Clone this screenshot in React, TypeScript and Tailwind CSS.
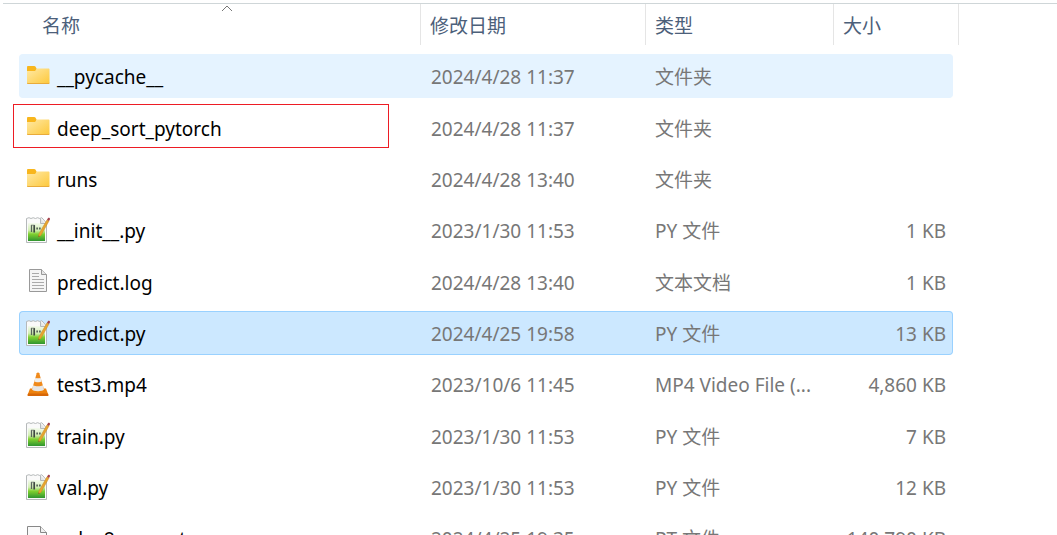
import type { ReactNode } from "react"

type IconKind = "folder" | "python" | "text" | "video" | "blank"

interface FileEntry {
  name: string
  modified: string
  type: string
  size?: string
  icon: IconKind
  state?: "hover" | "selected"
  marked?: boolean
}

const files: FileEntry[] = [
  { name: "__pycache__", modified: "2024/4/28 11:37", type: "文件夹", icon: "folder", state: "hover" },
  { name: "deep_sort_pytorch", modified: "2024/4/28 11:37", type: "文件夹", icon: "folder", marked: true },
  { name: "runs", modified: "2024/4/28 13:40", type: "文件夹", icon: "folder" },
  { name: "__init__.py", modified: "2023/1/30 11:53", type: "PY 文件", size: "1 KB", icon: "python" },
  { name: "predict.log", modified: "2024/4/28 13:40", type: "文本文档", size: "1 KB", icon: "text" },
  { name: "predict.py", modified: "2024/4/25 19:58", type: "PY 文件", size: "13 KB", icon: "python", state: "selected" },
  { name: "test3.mp4", modified: "2023/10/6 11:45", type: "MP4 Video File (...", size: "4,860 KB", icon: "video" },
  { name: "train.py", modified: "2023/1/30 11:53", type: "PY 文件", size: "7 KB", icon: "python" },
  { name: "val.py", modified: "2023/1/30 11:53", type: "PY 文件", size: "12 KB", icon: "python" },
  { name: "yolov8x-seg.pt", modified: "2024/4/25 19:35", type: "PT 文件", size: "140,790 KB", icon: "blank" },
]

function FileIcon({ kind }: { kind: IconKind }) {
  switch (kind) {
    case "folder":
      return (
        <svg className="size-6" viewBox="0 0 24 24" aria-hidden="true">
          <defs>
            <linearGradient id="folder" x1="0" y1="0" x2="1" y2="1">
              <stop offset="0" stopColor="#ffe9a6" />
              <stop offset="1" stopColor="#fdc83a" />
            </linearGradient>
          </defs>
          <path d="M1 3.2c0-.7.5-1.2 1.2-1.2h6c.5 0 .9.2 1.2.5L10.500 4.500v4H1z" fill="#f8b61d" />
          <path d="M1 7h8l2-2.500h11.500c.6 0 1 .4 1 1v13.300c0 .7-.4 1.200-1.200 1.200H2.200c-.8 0-1.200-.5-1.200-1.200z" fill="url(#folder)" />
          <path d="M1 18.500c0 1 .5 1.500 1.200 1.500h20.100c.8 0 1.200-.5 1.200-1.500-.3.400-.7.500-1.200.5H2.200c-.5 0-.9-.1-1.200-.5z" fill="#e9ab3a" />
        </svg>
      )
    case "python":
      return (
        <svg className="h-[26px] w-6" viewBox="0 0 24 26" aria-hidden="true">
          <defs>
            <linearGradient id="leaf" x1="0" y1="0" x2="0" y2="1">
              <stop offset="0" stopColor="#f4faee" />
              <stop offset=".4" stopColor="#d3efb4" />
              <stop offset=".62" stopColor="#7fd02f" />
              <stop offset="1" stopColor="#2f9430" />
            </linearGradient>
          </defs>
          <path d="M.5 1.500 3 .7l2 .8 2.200-.8 2.200.8 2.200-.8 2.200.8 2-.8L20.500 6v19.500H.5z" fill="#fafafa" stroke="#b5b9ba" />
          <path d="M2 6h17v18H2z" fill="url(#leaf)" />
          <path d="M14.500 1.500v5h5" fill="#e4e6e6" stroke="#b5b9ba" />
          <path d="M5.500 8v7" stroke="#59645b" strokeWidth="1.300" />
          <path d="M8.200 8v7.500" stroke="#3d4740" strokeWidth="1.700" />
          <path d="M5 8.200h3.500" stroke="#6d786f" strokeWidth=".8" />
          <path d="M10.300 11.500h1.700M13 11.500h1.700" stroke="#59645b" strokeWidth="1.800" />
          <path d="m21 2.800 2 1.200-8 14.200-2.500 1.800.4-3z" fill="#e6a52f" stroke="#c98827" strokeWidth=".5" />
          <path d="m21 2.800.9-1.600c.8-1 2.500 0 2 1.200L23 4z" fill="#a3414b" />
          <path d="m12.500 20 .2-1.400.9.700z" fill="#4b3b24" />
        </svg>
      )
    case "text":
      return (
        <svg className="size-6" viewBox="0 0 24 24" aria-hidden="true">
          <path d="M3.500.5h12l5 5v17h-17z" fill="#f5f5f5" stroke="#999" />
          <path d="M15.500.5v5h5" fill="#e5e5e5" stroke="#999" />
          <path d="M6 4.500h7M6 7.500h7M6 10.500h12M6 13.500h12M6 16.500h12M6 19.500h12" stroke="#aaa" />
        </svg>
      )
    case "video":
      return (
        <svg className="size-6" viewBox="0 0 24 24" aria-hidden="true">
          <path d="M4 16.500h16l2.300 6.200c.2.800-.2 1.300-1 1.300H2.700c-.8 0-1.200-.5-1-1.300z" fill="#ed820e" />
          <path d="M2 21.500h20l.4 1.500c0 .7-.4 1-1.100 1H2.700c-.7 0-1.100-.3-1.100-1z" fill="#d76708" />
          <path d="M10.700 1.200c.3-1 2.300-1 2.600 0L18 17.500c-1.200 2.300-10.800 2.300-12 0z" fill="#f08a1c" />
          <path d="m9.400 5.700-1.100 3.900c1.700 1 5.700 1 7.400 0l-1.100-3.900c-1.300.7-3.900.7-5.200 0z" fill="#efefef" />
          <path d="m7.200 13.300-1.200 4.200c1.200 2.300 10.800 2.300 12 0l-1.200-4.200c-2.200 1.400-7.400 1.400-9.600 0z" fill="#e6e6e6" />
        </svg>
      )
    case "blank":
      return (
        <svg className="size-6" viewBox="0 0 24 24" aria-hidden="true">
          <path d="M1.500.5h13l6 6v17h-19z" fill="#fafafa" stroke="#888" />
          <path d="M14.500.5v6h6" fill="#f0f0f0" stroke="#888" />
        </svg>
      )
  }
}

function cellColor(state?: FileEntry["state"]) {
  if (state === "hover") return "border-[#e5f3ff] bg-[#e5f3ff]"
  if (state === "selected") return "border-[#99d1ff] bg-[#cce8ff]"
  return "border-transparent"
}

function Cell({ file, className, children }: { file: FileEntry; className: string; children?: ReactNode }) {
  return (
    <div className={`flex h-11 items-center border-y whitespace-nowrap ${cellColor(file.state)} ${className}`}>
      {children}
    </div>
  )
}

function FileRow({ file }: { file: FileEntry }) {
  return (
    <tr className="h-[51px] nth-[3n+2]:h-[52px]">
      <td className="relative p-0 pl-4">
        <Cell file={file} className="gap-[7px] rounded-l-sm border-l pl-1.5 text-black">
          <FileIcon kind={file.icon} />
          <span className="pt-[3px]">{file.name}</span>
        </Cell>
        {file.marked && (
          <div className="absolute top-[3px] right-8 left-2.5 h-11 border border-[#ed1c24]" />
        )}
      </td>
      <td className="p-0">
        <Cell file={file} className="pt-[3px] pl-2.5">{file.modified}</Cell>
      </td>
      <td className="p-0">
        <Cell file={file} className="pt-[3px] pl-[9px]">{file.type}</Cell>
      </td>
      <td className="p-0 pr-1.5">
        <Cell file={file} className="justify-end rounded-r-sm border-r pt-[3px] pr-1.5">{file.size}</Cell>
      </td>
    </tr>
  )
}

export default function App() {
  return (
    <main className="h-screen overflow-hidden bg-white pt-[3px] pl-[3px] font-['Noto_Sans','Noto_Sans_CJK_SC',sans-serif] text-[19px] leading-6 text-[#777]">
      <div className="border-t border-[#cfd6d8] pr-[98px]">
        <table className="w-full table-fixed border-separate border-spacing-0">
          <colgroup>
            <col />
            <col className="w-[225px]" />
            <col className="w-[188px]" />
            <col className="w-[125px]" />
          </colgroup>
          <thead className="text-left text-[#4c607a]">
            <tr className="h-[41px]">
              <th className="relative border-r border-[#e5e5e5] p-0 pt-0.5 pl-[39px] font-normal" aria-sort="ascending">
                名称
                <svg className="absolute top-0 left-[218px] h-2 w-3" viewBox="0 0 12 8" fill="none" aria-hidden="true">
                  <path d="m1 7 5-5 5 5" stroke="#777" />
                </svg>
              </th>
              <th className="border-r border-[#e5e5e5] p-0 pt-0.5 pl-[9px] font-normal">修改日期</th>
              <th className="border-r border-[#e5e5e5] p-0 pt-0.5 pl-[9px] font-normal">类型</th>
              <th className="border-r border-[#e5e5e5] p-0 pt-0.5 pl-[9px] font-normal">大小</th>
            </tr>
          </thead>
          <tbody className="before:block before:h-[5px]">
            {files.map((file) => (
              <FileRow key={file.name} file={file} />
            ))}
          </tbody>
        </table>
      </div>
    </main>
  )
}
